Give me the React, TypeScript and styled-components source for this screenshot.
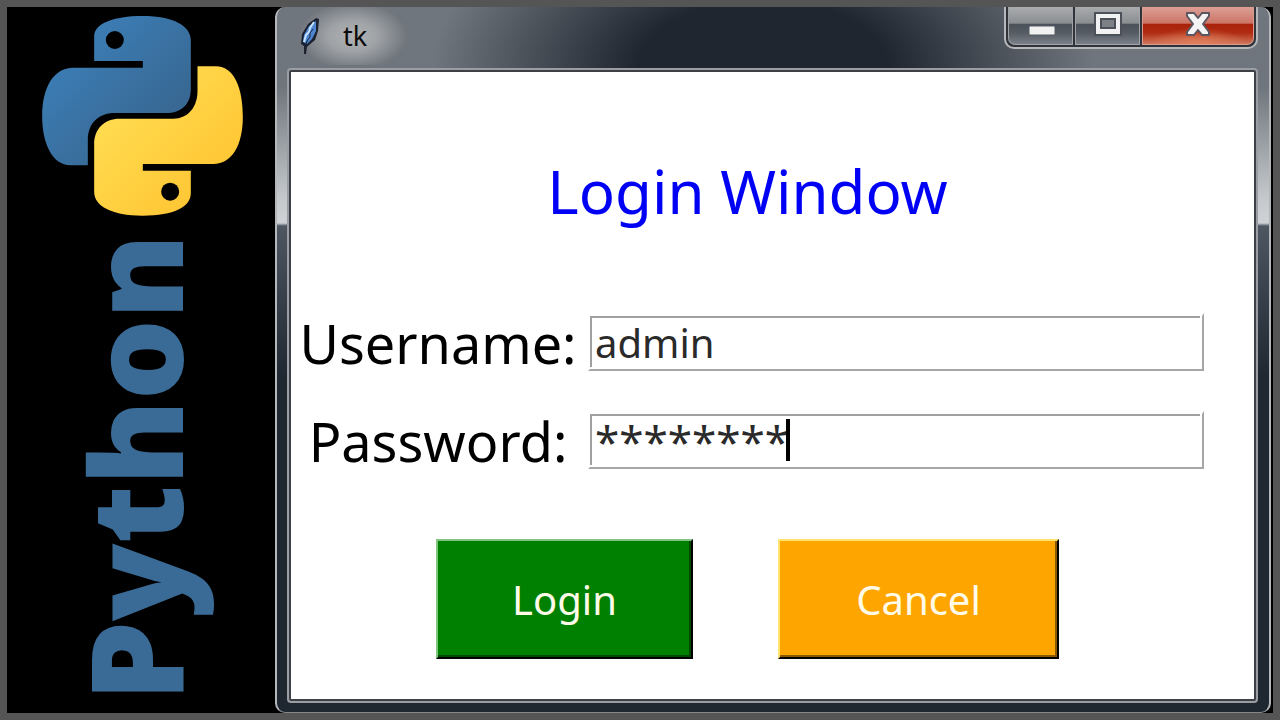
import React, { useState } from 'react';
import styled, { createGlobalStyle } from 'styled-components';

const GlobalStyle = createGlobalStyle`
  * { box-sizing: border-box; }
  body {
    margin: 0;
    background: #555;
    font-family: 'Noto Sans', sans-serif;
  }
`;

const Page = styled.div`
  display: grid;
  grid-template-columns: 268px 1fr;
  min-height: 100vh;
  border: 7px solid #555;
  background: #000;
`;

const Brand = styled.aside`
  display: flex;
  flex-direction: column;
  align-items: center;
  justify-content: space-between;
  padding: 9px 0 12px 2px;
`;

const Logo = styled.svg`
  width: 201px;
  height: 200px;
`;

const BrandName = styled.h2`
  margin: 0 16px 0 0;
  writing-mode: vertical-rl;
  transform: rotate(180deg);
  font: 800 127px/160px 'Open Sans', sans-serif;
  color: #3a6b96;
`;

const Window = styled.main`
  display: flex;
  flex-direction: column;
  margin-right: 2px;
  padding: 0 11px 9px 10px;
  border: 2px solid #b4b8bb;
  border-top: 0;
  border-bottom: 1px solid #85898c;
  border-radius: 10px;
  background:
    radial-gradient(ellipse 330px 180px at 49% 62px, #1f2630 0 38%, #1f263000 100%) top / 100% 64px no-repeat,
    linear-gradient(#70767d 0, #6f757c 80px, #c4c8cb 190px, #d0d3d6 216px, #4d5661 219px, #1f2731 370px);
`;

const TitleBar = styled.header`
  display: flex;
  justify-content: space-between;
  align-items: flex-start;
  height: 61px;
`;

const TitleGroup = styled.div`
  display: flex;
  align-items: center;
  height: 58px;
  padding-left: 12px;
`;

const Feather = styled.svg`
  position: relative;
  z-index: 1;
  width: 22px;
  height: 38px;
`;

const Title = styled.span`
  margin-left: -22px;
  padding: 0 48px 0 44px;
  background: radial-gradient(ellipse 54px 34px at 54px 50%, #b0b2b4 0, #a0a3a6 45%, #a0a3a600 100%);
  font-size: 27px;
  line-height: 58px;
  color: #0b0b0b;
`;

const WindowControls = styled.div`
  display: flex;
  height: 42px;
  border: 2px solid #b5b9bc;
  border-top: 0;
  border-radius: 0 0 10px 10px;
  background: #30343a;
  padding: 0 2px 2px;
  gap: 2px;
`;

const ControlButton = styled.button<{ $close?: boolean }>`
  display: grid;
  place-items: center;
  width: ${p => (p.$close ? 112 : 65)}px;
  padding: 0 0 4px;
  border: 1px solid ${p => (p.$close ? '#d99b8e' : '#a0a4a8')};
  border-top: 0;
  border-radius: ${p => (p.$close ? '0 0 7px 0' : '0')};
  background: ${p =>
    p.$close
      ? 'radial-gradient(ellipse 50px 16px at 50% 100%, #e0805c 0, #e0805c00 100%), linear-gradient(#dd9f95 0, #cb7466 44%, #a92109 46%, #b02c12 70%, #cf765c 100%)'
      : 'linear-gradient(#a9abad 0, #8b8e91 44%, #4b5159 46%, #565c64 70%, #7a8087 100%)'};

  &:first-child { border-radius: 0 0 0 7px; }
`;

const Client = styled.div`
  flex: 1;
  border: 2px solid #9a9ea3;
  border-radius: 4px;
  background: #3d4047;
  padding: 2px;
  display: flex;
`;

const LoginForm = styled.form`
  flex: 1;
  padding: 79px 50px 39px 0;
  background: #fff;
`;

const Heading = styled.h1`
  margin: 0 0 82px;
  font-size: 60px;
  font-weight: 400;
  line-height: 80px;
  text-align: center;
  color: #0000f5;
`;

const Fields = styled.div`
  display: grid;
  grid-template-columns: 294px 1fr;
  column-gap: 3px;
  row-gap: 40px;
`;

const Label = styled.label`
  padding-top: 2px;
  font-size: 54px;
  line-height: 56px;
  text-align: center;
  color: #000;
`;

const Entry = styled.div`
  position: relative;
  height: 58px;
  border: 2px solid #a6a6a6;
  border-top: 3px solid transparent;
  border-left-color: transparent;
`;

const Input = styled.input<{ $masked?: boolean }>`
  display: block;
  width: calc(100% - 2px);
  height: 51px;
  padding: 0 3px;
  border: 0 solid #a0a0a0;
  border-width: 2px 0 0 2px;
  outline: 0;
  background: #fff;
  font-family: inherit;
  font-size: ${p => (p.$masked ? 44 : 40)}px;
  color: #2a2a2a;
`;

const Caret = styled.span`
  position: absolute;
  top: 5px;
  left: 196px;
  width: 4px;
  height: 42px;
  background: #000;
`;

const Actions = styled.div`
  display: flex;
  justify-content: center;
  gap: 85px;
  margin-top: 70px;
`;

const ActionButton = styled.button<{ $fill: string; $light: string; $shade: string; $width: number }>`
  width: ${p => p.$width}px;
  height: 120px;
  padding: 0;
  border: 2px solid #000;
  border-top-color: ${p => p.$light};
  border-left-color: ${p => p.$light};
  background: ${p => p.$fill};
  box-shadow: inset -2px -2px 0 ${p => p.$shade};
  font-family: inherit;
  font-size: 40px;
  color: #fffbe8;
`;

function PythonLogo() {
  return (
    <Logo viewBox="127 47 602 600" role="img" aria-label="Python logo">
      <defs>
        <linearGradient id="blue" x1="0" y1="0" x2="1" y2="1">
          <stop offset="0.15" stopColor="#3c7fb8" />
          <stop offset="0.75" stopColor="#386893" />
        </linearGradient>
        <linearGradient id="yellow" x1="0" y1="0" x2="1" y2="1">
          <stop offset="0.2" stopColor="#ffdc50" />
          <stop offset="0.8" stopColor="#ffc634" />
        </linearGradient>
      </defs>
      <path
        fill="url(#blue)"
        d="M283 182V108C283 70 340 47 428 47C523 47 573 78 573 120V265C573 312 545 338 498 338H345C295 338 264 370 264 420V495H212C158 495 127 430 127 348C127 260 162 202 220 202H429V182Z"
      />
      <circle cx="345" cy="119" r="27" />
      <path
        fill="url(#yellow)"
        d="M593 198H648C704 198 729 265 729 350C729 432 698 491 640 491H429V511H573V578C573 620 523 646 428 646C336 646 283 617 283 575V432C283 385 313 355 360 355H520C565 355 593 320 593 272Z"
      />
      <circle cx="511" cy="574" r="27" />
    </Logo>
  );
}

function FeatherIcon() {
  return (
    <Feather viewBox="0 0 22 38" aria-hidden="true">
      <path d="M17 1L20 2L19 14L16 23L10 28L8 30L7 37H5V29L2 27L3 17L9 7Z" fill="#1c2230" />
      <path d="M17 4L17 14L13 22L8 27L4 25L5 18L10 9Z" fill="#4d86cf" />
      <path d="M15 5L11 11L10 15L7 18L5 25" fill="none" stroke="#c4e2ff" strokeWidth="2" />
      <path d="M14 12L11 16L11 20L8 24L6 30" fill="none" stroke="#16243c" strokeWidth="1" />
    </Feather>
  );
}

export default function App() {
  const [username, setUsername] = useState('admin');
  const [password, setPassword] = useState('********');

  return (
    <>
      <GlobalStyle />
      <Page>
        <Brand>
          <PythonLogo />
          <BrandName>Python</BrandName>
        </Brand>
        <Window>
          <TitleBar>
            <TitleGroup>
              <FeatherIcon />
              <Title>tk</Title>
            </TitleGroup>
            <WindowControls>
              <ControlButton type="button" aria-label="Minimize">
                <svg width="28" height="30" viewBox="0 0 28 30">
                  <rect x="2" y="17" width="26" height="9" rx="1" fill="#f1f1f1" stroke="#555a62" strokeWidth="1" />
                </svg>
              </ControlButton>
              <ControlButton type="button" aria-label="Maximize">
                <svg width="28" height="30" viewBox="0 0 28 30">
                  <path fillRule="evenodd" d="M1 4H27V26H1ZM7 10V19H21V10Z" fill="#f1f1f1" stroke="#4b5059" strokeWidth="2" />
                  <rect x="8" y="11" width="12" height="7" fill="#7d8186" />
                </svg>
              </ControlButton>
              <ControlButton type="button" aria-label="Close" $close>
                <svg width="28" height="30" viewBox="0 0 28 30">
                  <path
                    d="M3 4H10L14 9L18 4H25V7L19 15L25 23V26H18L14 21L10 26H3V23L9 15L3 7Z"
                    fill="#f4f4f4"
                    stroke="#5b5660"
                    strokeWidth="2"
                    strokeLinejoin="round"
                  />
                </svg>
              </ControlButton>
            </WindowControls>
          </TitleBar>
          <Client>
            <LoginForm onSubmit={e => e.preventDefault()}>
              <Heading>Login Window</Heading>
              <Fields>
                <Label htmlFor="username">Username:</Label>
                <Entry>
                  <Input id="username" value={username} onChange={e => setUsername(e.target.value)} />
                </Entry>
                <Label htmlFor="password">Password:</Label>
                <Entry>
                  <Input id="password" $masked value={password} onChange={e => setPassword(e.target.value)} />
                  <Caret />
                </Entry>
              </Fields>
              <Actions>
                <ActionButton type="submit" $width={257} $fill="#008000" $light="#7fc57f" $shade="#004800">
                  Login
                </ActionButton>
                <ActionButton type="button" $width={281} $fill="#ffa500" $light="#ffe36e" $shade="#8a5a00">
                  Cancel
                </ActionButton>
              </Actions>
            </LoginForm>
          </Client>
        </Window>
      </Page>
    </>
  );
}
